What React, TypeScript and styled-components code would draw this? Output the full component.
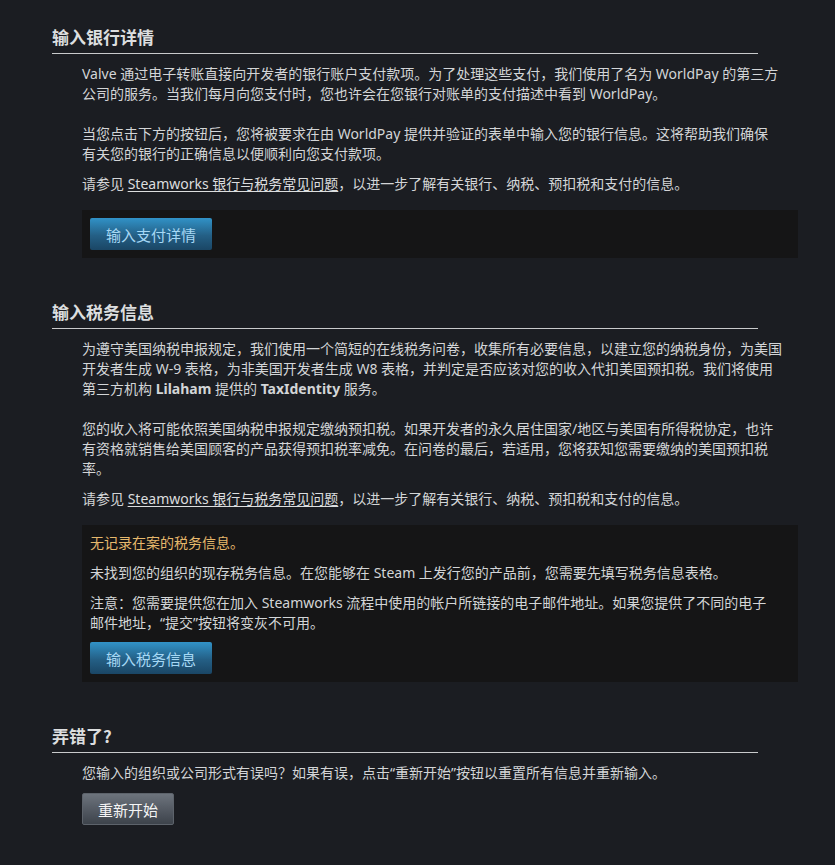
import React from 'react';
import styled, {createGlobalStyle} from 'styled-components';

const GlobalStyle = createGlobalStyle`
  html, body {
    margin: 0;
    padding: 0;
    background: #1b1d22;
  }
  body {
    font-family: "Noto Sans", "Noto Sans CJK SC", sans-serif;
    color: #d3d5d7;
    font-size: 14px;
    line-height: 20px;
  }
`;

const Page = styled.div`
  padding: 26px 0 40px 52px;
  min-height: 865px;
  box-sizing: border-box;
`;

const Section = styled.section`
  & + & {
    margin-top: 43px;
  }
`;

const Heading = styled.h2`
  width: 706px;
  margin: 0;
  padding-bottom: 5px;
  border-bottom: 1px solid #c9cacc;
  font-family: "Noto Sans CJK SC", "Noto Sans", sans-serif;
  font-size: 17px;
  line-height: 22px;
  font-weight: 700;
  color: #dcdedf;
`;

const Body = styled.div`
  width: 716px;
  margin: 10px 0 0 30px;
`;

const Para = styled.p<{$tone?: 'warn'}>`
  margin: 0;
  color: ${({$tone}) => ($tone === 'warn' ? '#e6b86c' : '#d3d5d7')};
  & + & {
    margin-top: 10px;
  }
`;

const Link = styled.a`
  color: #dcdedf;
  text-decoration: underline;
  text-underline-offset: 2px;
  cursor: pointer;
`;

const Panel = styled.div`
  margin-top: 16px;
  padding: 8px;
  background: #151516;
  display: flex;
  flex-direction: column;
  align-items: flex-start;
`;

const NoticePanel = styled(Panel)`
  ${Para} {
    width: 700px;
  }
`;

const BlueButton = styled.button`
  height: 32px;
  padding: 0 16px;
  border: none;
  border-radius: 2px;
  background: linear-gradient(to bottom, #3192c7 0%, #245f85 55%, #1a4665 100%);
  color: #a6d8f5;
  font-family: "Noto Sans CJK SC", sans-serif;
  font-size: 15px;
  cursor: pointer;
`;

const ButtonRow = styled.div`
  margin-top: 9px;
`;

const GreyButton = styled.button`
  margin-top: 10px;
  height: 32px;
  padding: 0 15px;
  border: 1px solid #5d636b;
  border-radius: 2px;
  background: linear-gradient(to bottom, #6d747d 0%, #525861 55%, #3d434b 100%);
  color: #f5f5f5;
  font-family: "Noto Sans CJK SC", sans-serif;
  font-size: 15px;
  cursor: pointer;
`;

const FaqLine = () => (
  <Para>
    请参见 <Link>Steamworks 银行与税务常见问题</Link>，以进一步了解有关银行、纳税、预扣税和支付的信息。
  </Para>
);

export default function App() {
  return (
    <>
      <GlobalStyle />
      <Page>
        <Section>
          <Heading>输入银行详情</Heading>
          <Body>
            <Para>
              Valve 通过电子转账直接向开发者的银行账户支付款项。为了处理这些支付，我们使用了名为 WorldPay 的第三方<br />
              公司的服务。当我们每月向您支付时，您也许会在您银行对账单的支付描述中看到 WorldPay。<br />
              <br />
              当您点击下方的按钮后，您将被要求在由 WorldPay 提供并验证的表单中输入您的银行信息。这将帮助我们确保<br />
              有关您的银行的正确信息以便顺利向您支付款项。
            </Para>
            <FaqLine />
            <Panel>
              <BlueButton>输入支付详情</BlueButton>
            </Panel>
          </Body>
        </Section>

        <Section>
          <Heading>输入税务信息</Heading>
          <Body>
            <Para>
              为遵守美国纳税申报规定，我们使用一个简短的在线税务问卷，收集所有必要信息，以建立您的纳税身份，为美国<br />
              开发者生成 W-9 表格，为非美国开发者生成 W8 表格，并判定是否应该对您的收入代扣美国预扣税。我们将使用<br />
              第三方机构 <b>Lilaham</b> 提供的 <b>TaxIdentity</b> 服务。<br />
              <br />
              您的收入将可能依照美国纳税申报规定缴纳预扣税。如果开发者的永久居住国家/地区与美国有所得税协定，也许<br />
              有资格就销售给美国顾客的产品获得预扣税率减免。在问卷的最后，若适用，您将获知您需要缴纳的美国预扣税<br />
              率。
            </Para>
            <FaqLine />
            <NoticePanel>
              <Para $tone="warn">无记录在案的税务信息。</Para>
              <Para>未找到您的组织的现存税务信息。在您能够在 Steam 上发行您的产品前，您需要先填写税务信息表格。</Para>
              <Para>
                注意：您需要提供您在加入 Steamworks 流程中使用的帐户所链接的电子邮件地址。如果您提供了不同的电子<br />
                邮件地址，“提交”按钮将变灰不可用。
              </Para>
              <ButtonRow>
                <BlueButton>输入税务信息</BlueButton>
              </ButtonRow>
            </NoticePanel>
          </Body>
        </Section>

        <Section>
          <Heading>弄错了?</Heading>
          <Body>
            <Para>您输入的组织或公司形式有误吗？如果有误，点击“重新开始”按钮以重置所有信息并重新输入。</Para>
            <GreyButton>重新开始</GreyButton>
          </Body>
        </Section>
      </Page>
    </>
  );
}
